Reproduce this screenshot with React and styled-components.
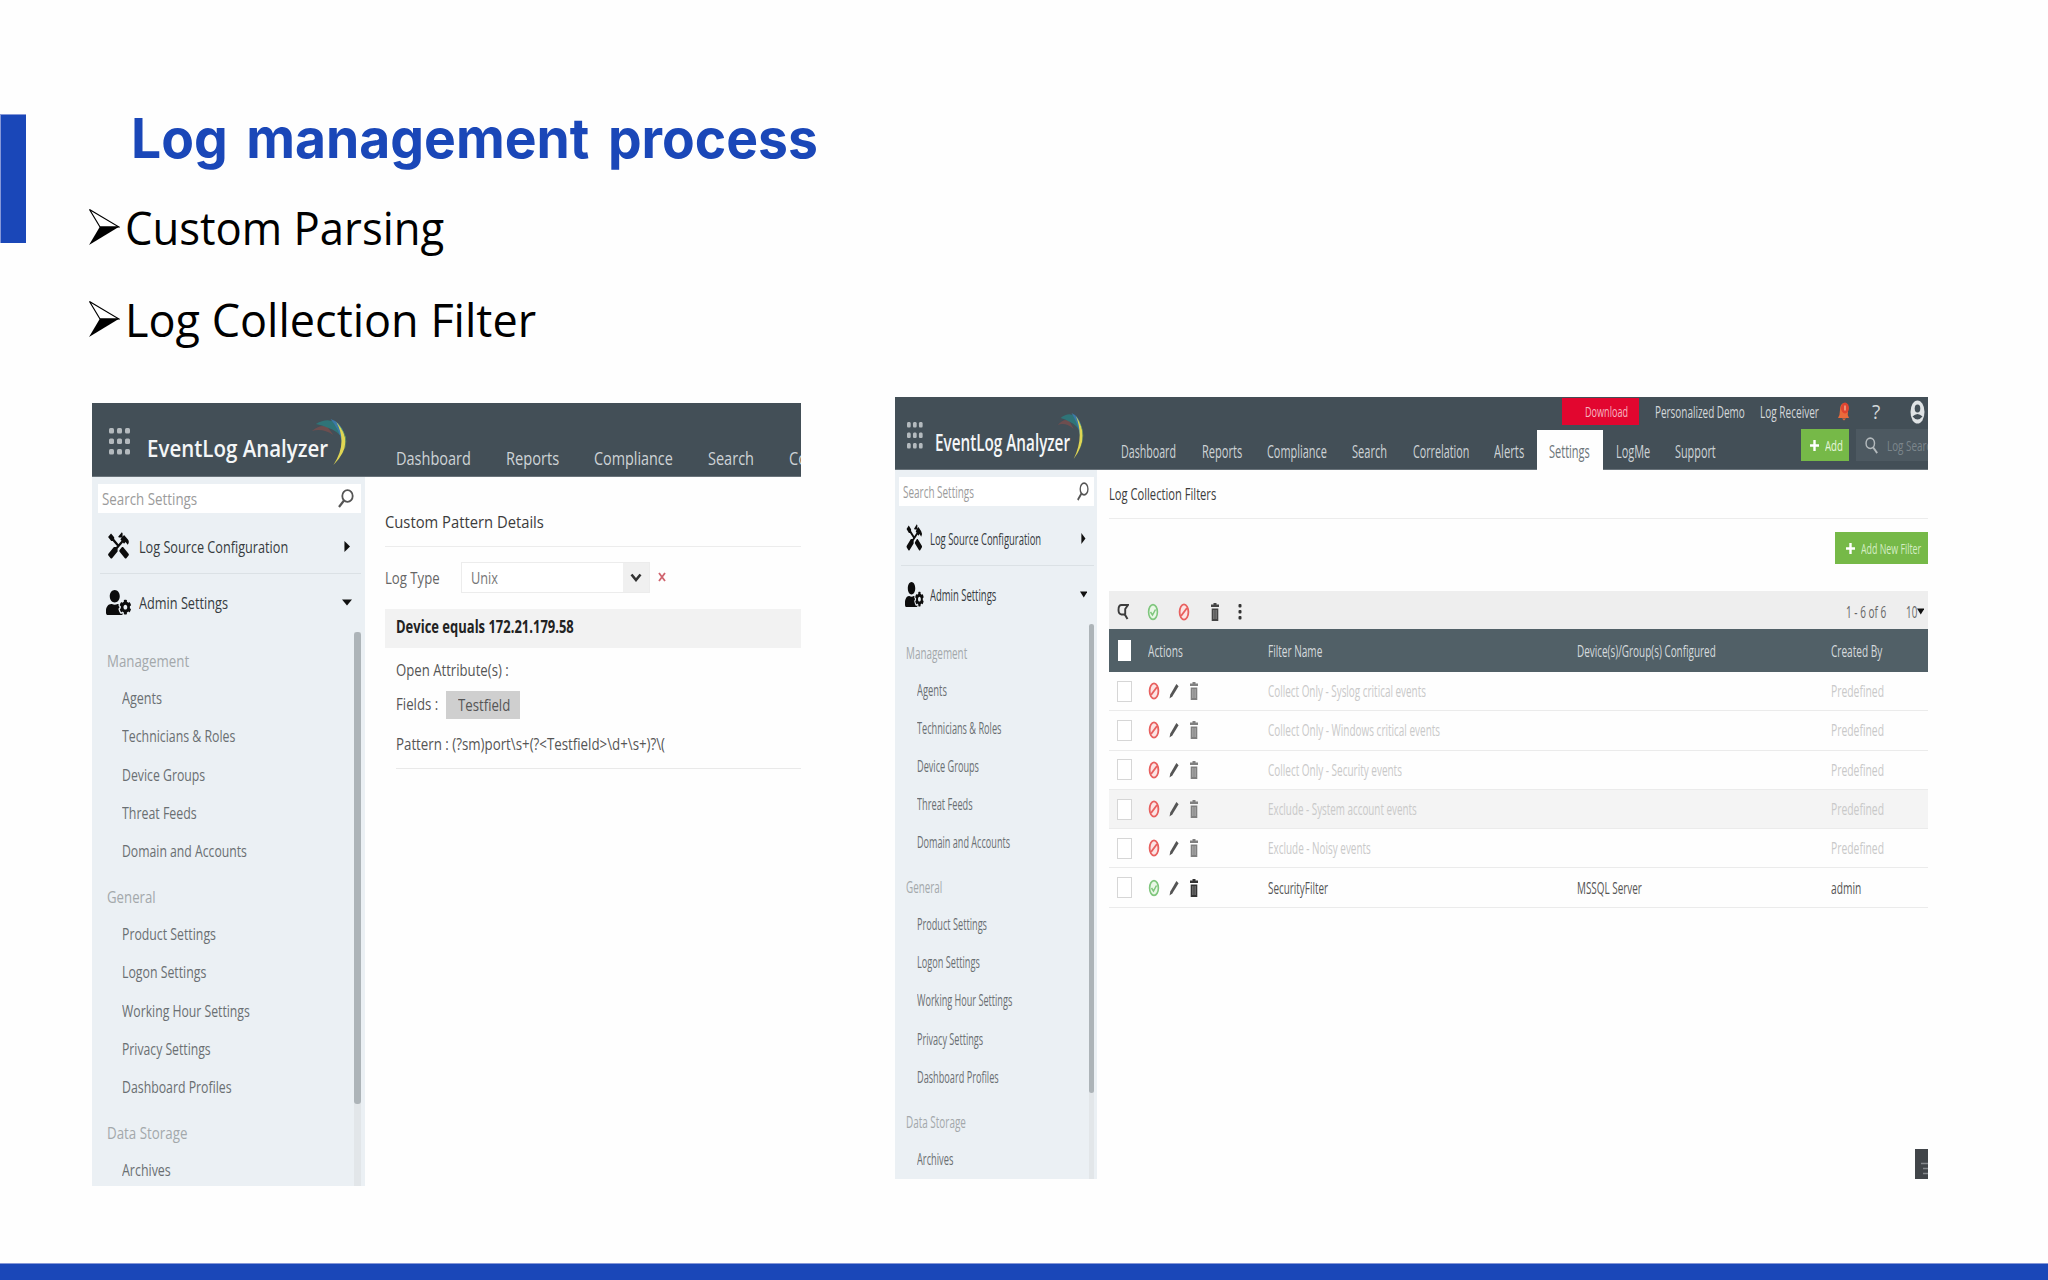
// react
import React, { useLayoutEffect, useRef, useState } from "react"
// etc
import styled, { createGlobalStyle } from "styled-components"
import { FaUserCog } from "react-icons/fa"
import { MdHandyman } from "react-icons/md"

/**
 * Styles
 */

const GlobalStyle = createGlobalStyle`
  * {
    box-sizing: border-box;
  }
  body {
    margin: 0;
    background: #fefefe;
    font-family: "Open Sans", "Noto Sans", sans-serif;
  }
  svg {
    display: block;
    flex-shrink: 0;
  }
`

const Slide = styled.main`
  display: flex;
  flex-direction: column;
  width: 2048px;
  height: 1280px;
  overflow: hidden;
`

const Top = styled.header`
  display: flex;
  height: 397px;
  padding-top: 114px;
`

const Accent = styled.div`
  width: 26px;
  height: 129px;
  background: #1a47b8;
  border-top: 1px solid #8698d8;
  border-left: 1px solid #8698d8;
`

const Intro = styled.div`
  padding-left: 62px;
`

const Title = styled.h1`
  margin: 0 0 0 43px;
  height: 50px;
  font-family: Inter, "Noto Sans", sans-serif;
  font-size: 55px;
  font-weight: 700;
  line-height: 48px;
  word-spacing: 6px;
  color: #1a47b8;
`

const Bullet = styled.div`
  display: flex;
  align-items: center;
  gap: 5px;
  height: 92px;
  margin-top: ${p => (p.$first ? "17px" : 0)};
  font-family: "Open Sans", sans-serif;
  font-size: 45px;
  line-height: 56px;
  color: #000;
`

const BulletText = styled.div`
  padding-top: 2px;
`

const Shots = styled.section`
  display: flex;
  align-items: flex-start;
  height: 866px;
  padding-left: 92px;
`

const Shot = styled.article`
  display: flex;
  flex-direction: column;
  position: relative;
  width: ${p => p.$width}px;
  height: ${p => p.$height}px;
  margin-top: ${p => p.$top || 0}px;
  margin-right: ${p => p.$gap || 0}px;
  overflow: hidden;
  font-size: 17px;
  background: #fefefe;
`

const Header = styled.div`
  display: flex;
  flex-shrink: 0;
  height: ${p => p.$height}px;
  background: #434f57;
  border-bottom: 1px solid #69737a;
`

const Brand = styled.div`
  display: flex;
  align-items: flex-start;
  flex-shrink: 0;
  width: ${p => p.$width}px;
  padding: 25px 0 0 ${p => p.$pad}px;
`

const BrandName = styled.div`
  margin: -3px 0 0 ${p => p.$gap}px;
  height: 46px;
  line-height: 46px;
  font-size: 24px;
  font-weight: 600;
  color: #f4f6f7;
`

const BrandArc = styled.div`
  margin: -11px 0 0 ${p => p.$shift}px;
`

const HeaderRight = styled.div`
  display: flex;
  flex-direction: column;
  justify-content: flex-end;
  flex-grow: 1;
`

const Utility = styled.div`
  display: flex;
  align-items: center;
  height: 34px;
  padding: 0 0 4px 465px;
  font-size: 16px;
  color: #d3d7da;
`

const Download = styled.div`
  width: 77px;
  height: 27px;
  margin-right: 16px;
  padding-left: 23px;
  line-height: 26px;
  font-size: 15px;
  background: #e2062f;
  color: #f6b6c1;
`

const Nav = styled.nav`
  display: flex;
  height: 39px;
  padding-left: ${p => p.$pad}px;
  font-size: 18px;
  line-height: 42px;
  color: #ced3d6;
`

const NavItem = styled.div`
  flex-shrink: 0;
  height: 39px;
  padding: 0 ${p => p.$pad}px;
  ${p =>
    p.$active &&
    `
    height: 40px;
    background: #fefefe;
    color: #6d7579;
  `}
`

const AddButton = styled.div`
  display: flex;
  align-items: center;
  gap: 6px;
  width: 48px;
  height: 32px;
  margin: -1px 7px 0 72px;
  padding-left: 9px;
  font-size: 15px;
  background: #76b948;
  color: #e6f5db;
`

const LogSearch = styled.div`
  display: flex;
  align-items: center;
  gap: 9px;
  width: 90px;
  height: 32px;
  margin-top: -1px;
  padding-left: 9px;
  flex-shrink: 0;
  font-size: 15px;
  background: #4d5961;
  color: #7c868c;
`

const Body = styled.div`
  display: flex;
  flex-grow: 1;
  min-height: 0;
`

const Sidebar = styled.aside`
  position: relative;
  flex-shrink: 0;
  width: ${p => p.$width}px;
  padding-top: 7px;
  overflow: hidden;
  background: #ebf0f4;
`

const SearchBox = styled.div`
  display: flex;
  align-items: center;
  justify-content: space-between;
  height: 29px;
  margin: 0 ${p => 4 * p.$k}px ${p => p.$below}px ${p => 6 * p.$k}px;
  padding: 0 ${p => 7 * p.$k}px 0 ${p => p.$pad}px;
  background: #fff;
  color: #9b9b9b;
`

const Section = styled.div`
  display: flex;
  align-items: center;
  height: ${p => p.$height}px;
  margin: 0 ${p => 4 * p.$k}px 0 ${p => 8 * p.$k}px;
  padding: 0 ${p => p.$end * p.$k}px 0 ${p => 6 * p.$k}px;
  border-bottom: 1px solid ${p => (p.$line ? "#dbe1e5" : "transparent")};
  color: #363b3e;
`

const SectionName = styled.div`
  flex-grow: 1;
  padding-left: ${p => p.$gap}px;
`

const Menu = styled.div`
  padding-top: 4px;
`

const Group = styled.div`
  margin-top: 9px;
`

const GroupName = styled.div`
  height: 34.9px;
  padding-left: ${p => p.$pad}px;
  line-height: 34px;
  color: #a3a8ab;
`

const MenuItem = styled.div`
  height: ${p => p.$height}px;
  padding-left: ${p => p.$pad}px;
  line-height: ${p => p.$height}px;
  color: #6a6f72;
`

// the thumb floats over the menu
const Scrollbar = styled.div`
  position: absolute;
  top: ${p => p.$top}px;
  right: ${p => 4 * p.$k}px;
  bottom: 0;
  width: ${p => (p.$k < 1 ? 5 : 7)}px;
  background: #e2e6e9;
  &::before {
    content: "";
    display: block;
    height: ${p => p.$thumb}px;
    border-radius: 3px;
    background: #adb4b8;
  }
`

const Content = styled.section`
  flex-grow: 1;
  min-width: 0;
  padding-left: ${p => p.$pad}px;
`

const Heading = styled.div`
  height: ${p => p.$height}px;
  padding-top: ${p => p.$top}px;
  line-height: 24px;
  border-bottom: 1px solid #ececec;
  color: #3c3c3c;
`

const TypeRow = styled.div`
  display: flex;
  align-items: center;
  height: 62px;
  padding-bottom: 2px;
  color: #666;
`

const TypeSelect = styled.div`
  display: flex;
  align-items: center;
  width: 189px;
  height: 31px;
  margin: 0 8px 0 21px;
  padding-left: 9px;
  border: 1px solid #ececec;
  background: #fff;
  color: #777;
`

const SelectArrow = styled.div`
  display: flex;
  align-items: center;
  justify-content: center;
  width: 26px;
  height: 29px;
  margin-left: auto;
  background: #f0f0f0;
`

const Condition = styled.div`
  height: 39px;
  padding-left: 11px;
  line-height: 36px;
  font-weight: 700;
  background: #f2f2f2;
  color: #222;
`

const Details = styled.div`
  height: 121px;
  margin-left: 11px;
  border-bottom: 1px solid #e9e9e9;
  color: #555;
`

const DetailRow = styled.div`
  display: flex;
  align-items: center;
  gap: 8px;
  height: ${p => p.$height}px;
`

const Chip = styled.span`
  height: 28px;
  margin-top: 3px;
  padding: 0 10px 0 12px;
  line-height: 28px;
  background: #cfcfcf;
`

const ButtonRow = styled.div`
  display: flex;
  justify-content: flex-end;
  height: 72px;
  padding-top: 13px;
`

const NewFilter = styled.div`
  display: flex;
  align-items: center;
  gap: 6px;
  width: 93px;
  height: 32px;
  padding-left: 11px;
  font-size: 15px;
  background: #76b948;
  color: #d5edc4;
`

const Toolbar = styled.div`
  display: flex;
  align-items: center;
  height: 38px;
  padding: 3px 4px 0 8px;
  background: #eee;
  color: #666;
`

const ToolIcon = styled.div`
  display: flex;
  width: ${p => p.$width}px;
`

const Pager = styled.div`
  display: flex;
  align-items: center;
  margin-left: auto;
`

const TableRow = styled.div`
  display: grid;
  grid-template-columns: 39px 120px 309px 254px 97px;
  align-items: center;
  height: ${p => (p.$head ? 43 : 39.3)}px;
  border-bottom: ${p => (p.$head ? "none" : "1px solid #ebebeb")};
  background: ${p => (p.$head ? "#516067" : p.$shaded ? "#f4f4f4" : "transparent")};
  color: ${p => (p.$head ? "#d5dadd" : p.$muted ? "#c9c9c9" : "#555")};
  font-size: 16px;
`

const Check = styled.div`
  width: ${p => (p.$head ? 13 : 15)}px;
  height: 21px;
  margin-left: ${p => (p.$head ? 9 : 8)}px;
  background: #fff;
  border: 1px solid ${p => (p.$head ? "#fff" : "#d6d6d6")};
`

const Actions = styled.div`
  display: flex;
  align-items: center;
`

// dark tile of the chat widget, laid over the page corner
const Corner = styled.div`
  position: absolute;
  right: 0;
  bottom: 0;
  width: 13px;
  height: 30px;
  padding: 13px 0 0 6px;
  background: #414549;
`

const Footer = styled.footer`
  height: 17px;
  background: #1a47b8;
  border-top: 1px solid #8698d8;
`

const FitBox = styled.span`
  display: inline-block;
  flex-shrink: 0;
  width: ${p => p.$width}px;
  white-space: nowrap;
  vertical-align: top;
`

const FitText = styled.span`
  display: inline-block;
  transform-origin: 0 50%;
  vertical-align: top;
`

/**
 * Text condensed to a given width
 */

const Fit = ({ w, children }) => {
  const ref = useRef(null)
  const [scale, setScale] = useState(1)
  useLayoutEffect(() => {
    setScale(w / ref.current.offsetWidth)
  }, [w])
  return (
    <FitBox $width={w}>
      <FitText ref={ref} style={{ transform: `scaleX(${scale})` }}>
        {children}
      </FitText>
    </FitBox>
  )
}

/**
 * Icons
 */

const Arrowhead = () => (
  <svg width="32" height="38" viewBox="0 0 32 38">
    <path d="M1.5 1.5L31 19L12 19Z" fill="#fff" stroke="#000" strokeWidth="1.2" />
    <path d="M1 37L12 18.5H31.5Z" fill="#000" />
  </svg>
)

const Dots = ({ w }) => (
  <svg width={w} height="27" viewBox="0 0 21 27" preserveAspectRatio="none">
    {[0, 8, 16].map(x =>
      [0, 10.5, 21].map(y => (
        <rect key={x + "-" + y} x={x} y={y} width="5" height="5.5" rx="1.5" fill="#b4babe" />
      ))
    )}
  </svg>
)

const Arc = ({ w }) => (
  <svg width={w} height="48" viewBox="0 0 38 48" preserveAspectRatio="none">
    <path d="M1 14Q10 7 17 10L23 18Q12 11 1 14Z" fill="#6d4e4f" />
    <path d="M5 7Q17 0 26 6Q31 12 33 22Q26 13 18 11Q11 8 5 7Z" fill="#2f7478" />
    <path d="M20 2Q31 5 34 17L32 26Q29 12 20 2Z" fill="#3c79a6" />
    <path d="M26 5Q46 26 23 48Q38 26 26 5Z" fill="#e0d653" />
    <path d="M27 7Q42 22 31 39Q43 21 27 7Z" fill="#69ad62" />
  </svg>
)

const Lens = ({ w, h = 19, color = "#555", flip }) => (
  <svg width={w} height={h} viewBox="0 0 16 19" preserveAspectRatio="none">
    <g transform={flip ? "translate(16 0) scale(-1 1)" : undefined}>
      <ellipse cx="6.5" cy="7" rx="5.2" ry="5.8" fill="none" stroke={color} strokeWidth="1.8" />
      <path d="M10 11.5L15 18" stroke={color} strokeWidth="2.2" />
    </g>
  </svg>
)

// lens of the toolbar, with a small filter arrow beside it
const FindIcon = () => (
  <svg width="12" height="17" viewBox="0 0 12 17">
    <path d="M8 11.5H4.5Q1.5 11 1.5 7Q1.5 2 4.5 2H11L8.2 6V11.5" fill="none" stroke="#3c3c3c" strokeWidth="1.9" />
    <path d="M7.5 11L10.5 16" stroke="#3c3c3c" strokeWidth="2" />
  </svg>
)

const Caret = ({ right, k = 1 }) =>
  right ? (
    <svg width={6.5 * k} height="11" viewBox="0 0 7 11" preserveAspectRatio="none">
      <path d="M0.5 0L6.5 5.5L0.5 11Z" fill="#111" />
    </svg>
  ) : (
    <svg width={10 * k} height="7" viewBox="0 0 10 7" preserveAspectRatio="none">
      <path d="M0 0.5H10L5 6.5Z" fill="#111" />
    </svg>
  )

const Plus = () => (
  <svg width="9" height="13" viewBox="0 0 9 13">
    <path d="M4.5 1V12M0 6.5H9" stroke="#fff" strokeWidth="2.4" />
  </svg>
)

const Disable = () => (
  <svg width="12" height="18" viewBox="0 0 12 18">
    <ellipse cx="6" cy="9" rx="4.4" ry="7.6" fill="#fce4e4" stroke="#e8605f" strokeWidth="1.8" />
    <path d="M3 13L9 5" stroke="#e8605f" strokeWidth="1.8" />
  </svg>
)

const Enable = () => (
  <svg width="12" height="18" viewBox="0 0 12 18">
    <ellipse cx="6" cy="9" rx="4.4" ry="7.4" fill="#e9f7e6" stroke="#7fc67d" strokeWidth="1.6" />
    <path d="M3.5 9L5.5 12L8.5 6.5" fill="none" stroke="#7fc67d" strokeWidth="1.5" />
  </svg>
)

const Pencil = () => (
  <svg width="10" height="16" viewBox="0 0 10 16">
    <path d="M0.5 15.5L1.3 11.5L7.4 1L9.6 3.3L3.3 13.5Z" fill="#555" />
  </svg>
)

const Trash = ({ color = "#444" }) => (
  <svg width="8" height="18" viewBox="0 0 8 18">
    <path d="M2.5 0H5.5V1.5H8V4H0V1.5H2.5ZM0.7 5.5H7.3V18H0.7Z" fill={color} />
    <path d="M2.9 7V16M5.1 7V16" stroke="#fff" strokeWidth="0.7" opacity="0.6" />
  </svg>
)

const Kebab = () => (
  <svg width="4" height="16" viewBox="0 0 4 16">
    {[0, 6, 12].map(y => (
      <rect key={y} x="0.5" y={y} width="3" height="3.6" rx="1" fill="#333" />
    ))}
  </svg>
)

const Bell = () => (
  <svg width="13" height="19" viewBox="0 0 13 19">
    <path d="M1 16Q3 13 3 8Q3 2 7 1Q12 2 11 9Q10 13 12 16Z" fill="#e96a3b" />
    <path d="M5 16.5H9L7 18.5Z" fill="#e96a3b" />
    <ellipse cx="8" cy="6" rx="4" ry="5.4" fill="#df4430" />
    <path d="M8 3.5V8.5" stroke="#f4c3a8" strokeWidth="1.2" />
  </svg>
)

const Person = () => (
  <svg width="15" height="24" viewBox="0 0 15 24">
    <ellipse cx="7.5" cy="12" rx="7" ry="11.5" fill="#dfe3e5" />
    <ellipse cx="7.5" cy="8.5" rx="2.8" ry="4" fill="#434f57" />
    <path d="M2.5 16.5Q7.5 11.5 12.5 16.5Q7.5 22.5 2.5 16.5Z" fill="#434f57" />
  </svg>
)

/**
 * Data
 */

const menu = [
  {
    name: "Management",
    w: 82,
    items: [
      ["Agents", 40],
      ["Technicians & Roles", 113],
      ["Device Groups", 83],
      ["Threat Feeds", 75],
      ["Domain and Accounts", 125]
    ]
  },
  {
    name: "General",
    w: 49,
    items: [
      ["Product Settings", 94],
      ["Logon Settings", 84],
      ["Working Hour Settings", 128],
      ["Privacy Settings", 89],
      ["Dashboard Profiles", 110]
    ]
  },
  { name: "Data Storage", w: 80, items: [["Archives", 49]] }
]

const tabs = [
  ["Dashboard", 75, 55],
  ["Reports", 53, 40],
  ["Compliance", 79, 60],
  ["Search", 46, 35],
  ["Correlation", 76, 56],
  ["Alerts", 39, 30],
  ["Settings", 54, 41],
  ["LogMe", 48, 34],
  ["Support", 56, 41]
]

const filters = [
  { name: "Collect Only - Syslog critical events", w: 158 },
  { name: "Collect Only - Windows critical events", w: 172 },
  { name: "Collect Only - Security events", w: 134 },
  { name: "Exclude - System account events", w: 149, shaded: true },
  { name: "Exclude - Noisy events", w: 103 },
  { name: "SecurityFilter", w: 60, device: "MSSQL Server", custom: true }
]

/**
 * Shared parts
 */

const Logo = ({ k, width, pad }) => (
  <Brand $width={width} $pad={pad}>
    <Dots w={21 * k} />
    <BrandName $gap={k < 1 ? 12 : 17}>
      <Fit w={181 * k}>EventLog Analyzer</Fit>
    </BrandName>
    <BrandArc $shift={-17 * k}>
      <Arc w={37 * k} />
    </BrandArc>
  </Brand>
)

const Side = ({ k, width }) => {
  const small = k < 1
  const row = small ? 38.1 : 38.4
  return (
    <Sidebar $width={width}>
      <SearchBox $k={k} $below={small ? 5 : 6} $pad={4}>
        <Fit w={95 * k}>Search Settings</Fit>
        <Lens w={16 * k} flip />
      </SearchBox>
      <Section $k={k} $height={55} $end={11} $line>
        <MdHandyman size={30} color="#0c0c0c" preserveAspectRatio="none" style={{ width: 25 * k }} />
        <SectionName $gap={8 * k}>
          <Fit w={149 * k}>Log Source Configuration</Fit>
        </SectionName>
        <Caret right k={k} />
      </Section>
      <Section $k={k} $height={57} $end={9}>
        <FaUserCog size={25} color="#0c0c0c" preserveAspectRatio="none" style={{ width: 25 * k }} />
        <SectionName $gap={8 * k}>
          <Fit w={89 * k}>Admin Settings</Fit>
        </SectionName>
        <Caret k={k} />
      </Section>
      <Menu>
        {menu.map(group => (
          <Group key={group.name}>
            <GroupName $pad={small ? 11 : 15}>
              <Fit w={group.w * k}>{group.name}</Fit>
            </GroupName>
            {group.items.map(([name, w]) => (
              <MenuItem key={name} $height={row} $pad={small ? 22 : 30}>
                <Fit w={w * k}>{name}</Fit>
              </MenuItem>
            ))}
          </Group>
        ))}
      </Menu>
      <Scrollbar $k={k} $top={small ? 154 : 155} $thumb={small ? 469 : 472} />
    </Sidebar>
  )
}

const PatternShot = () => (
  <Shot $width={709} $height={783} $top={6} $gap={94}>
    <Header $height={74}>
      <Logo k={1} width={272} pad={17} />
      <HeaderRight>
        <Nav $pad={15}>
          {tabs.slice(0, 5).map(([name, w]) => (
            <NavItem key={name} $pad={17.4}>
              <Fit w={w}>{name}</Fit>
            </NavItem>
          ))}
        </Nav>
      </HeaderRight>
    </Header>
    <Body>
      <Side k={1} width={273} />
      <Content $pad={20}>
        <Heading $height={70} $top={33}>
          <Fit w={159}>Custom Pattern Details</Fit>
        </Heading>
        <TypeRow>
          <Fit w={55}>Log Type</Fit>
          <TypeSelect>
            <Fit w={27}>Unix</Fit>
            <SelectArrow>
              <svg width="12" height="9" viewBox="0 0 12 9">
                <path d="M1.5 1.5L6 7L10.5 1.5" fill="none" stroke="#333" strokeWidth="2.6" />
              </svg>
            </SelectArrow>
          </TypeSelect>
          <svg width="8" height="10" viewBox="0 0 8 10">
            <path d="M1 1L7 9M7 1L1 9" stroke="#d0646e" strokeWidth="1.8" />
          </svg>
        </TypeRow>
        <Condition>
          <Fit w={178}>Device equals 172.21.179.58</Fit>
        </Condition>
        <Details>
          <DetailRow $height={43}>
            <Fit w={113}>Open Attribute(s) :</Fit>
          </DetailRow>
          <DetailRow $height={25}>
            <Fit w={42}>Fields :</Fit>
            <Chip>
              <Fit w={52}>Testfield</Fit>
            </Chip>
          </DetailRow>
          <DetailRow $height={54}>
            <Fit w={269}>{"Pattern : (?sm)port\\s+(?<Testfield>\\d+\\s+)?\\("}</Fit>
          </DetailRow>
        </Details>
      </Content>
    </Body>
  </Shot>
)

const FilterShot = () => (
  <Shot $width={1033} $height={782}>
    <Header $height={73}>
      <Logo k={0.745} width={202} pad={12} />
      <HeaderRight>
        <Utility>
          <Download>
            <Fit w={43}>Download</Fit>
          </Download>
          <Fit w={90}>Personalized Demo</Fit>
          <ToolIcon $width={15} />
          <Fit w={59}>Log Receiver</Fit>
          <ToolIcon $width={18} />
          <ToolIcon $width={35}>
            <Bell />
          </ToolIcon>
          <ToolIcon $width={38}>
            <Fit w={8}>
              <big>?</big>
            </Fit>
          </ToolIcon>
          <Person />
        </Utility>
        <Nav $pad={11.5}>
          {tabs.map(([name, , w]) => (
            <NavItem key={name} $pad={12.7}>
              <Fit w={w}>{name}</Fit>
            </NavItem>
          )).map(item =>
            item.key === "Settings" ? React.cloneElement(item, { $active: true }) : item
          )}
          <AddButton>
            <Plus />
            <Fit w={18}>Add</Fit>
          </AddButton>
          <LogSearch>
            <Lens w={13} h={17} color="#b4babd" />
            <Fit w={50}>Log Search</Fit>
          </LogSearch>
        </Nav>
      </HeaderRight>
    </Header>
    <Body>
      <Side k={0.745} width={202} />
      <Content $pad={12}>
        <Heading $height={49} $top={12}>
          <Fit w={107}>Log Collection Filters</Fit>
        </Heading>
        <ButtonRow>
          <NewFilter>
            <Plus />
            <Fit w={60}>Add New Filter</Fit>
          </NewFilter>
        </ButtonRow>
        <Toolbar>
          <ToolIcon $width={29.5}>
            <FindIcon />
          </ToolIcon>
          <ToolIcon $width={31}>
            <Enable />
          </ToolIcon>
          <ToolIcon $width={33}>
            <Disable />
          </ToolIcon>
          <ToolIcon $width={27}>
            <Trash />
          </ToolIcon>
          <Kebab />
          <Pager>
            <Fit w={40}>1 - 6 of 6</Fit>
            <ToolIcon $width={20} />
            <Fit w={11}>10</Fit>
            <Caret k={0.75} />
          </Pager>
        </Toolbar>
        <TableRow $head>
          <Check $head />
          <Fit w={35}>Actions</Fit>
          <Fit w={54}>Filter Name</Fit>
          <Fit w={139}>Device(s)/Group(s) Configured</Fit>
          <Fit w={51}>Created By</Fit>
        </TableRow>
        {filters.map(f => (
          <TableRow key={f.name} $shaded={f.shaded} $muted={!f.custom}>
            <Check />
            <Actions>
              <ToolIcon $width={21}>{f.custom ? <Enable /> : <Disable />}</ToolIcon>
              <ToolIcon $width={20.5}>
                <Pencil />
              </ToolIcon>
              <Trash color={f.custom ? "#333" : "#808080"} />
            </Actions>
            <Fit w={f.w}>{f.name}</Fit>
            <div>{f.device && <Fit w={65}>{f.device}</Fit>}</div>
            <Fit w={f.custom ? 30 : 53}>{f.custom ? "admin" : "Predefined"}</Fit>
          </TableRow>
        ))}
      </Content>
    </Body>
    <Corner>
      <svg width="7" height="14" viewBox="0 0 7 14">
        <path d="M0 1.5H7M2 6.5H7M2 11.5H7" stroke="#85898d" strokeWidth="1.6" />
      </svg>
    </Corner>
  </Shot>
)

/**
 * Main component
 */

const App = () => (
  <Slide>
    <GlobalStyle />
    <Top>
      <Accent />
      <Intro>
        <Title>
          <Fit w={687}>Log management process</Fit>
        </Title>
        <Bullet $first>
          <Arrowhead />
          <BulletText>
            <Fit w={319}>Custom Parsing</Fit>
          </BulletText>
        </Bullet>
        <Bullet>
          <Arrowhead />
          <BulletText>
            <Fit w={411}>Log Collection Filter</Fit>
          </BulletText>
        </Bullet>
      </Intro>
    </Top>
    <Shots>
      <PatternShot />
      <FilterShot />
    </Shots>
    <Footer />
  </Slide>
)

export default App
